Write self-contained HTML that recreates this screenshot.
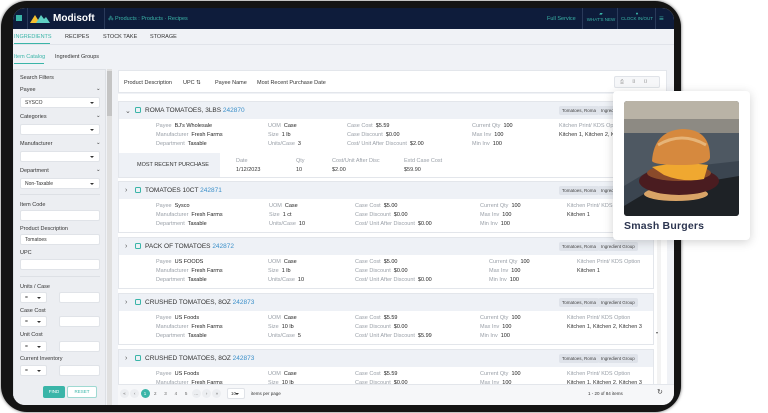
<!DOCTYPE html>
<html><head><meta charset="utf-8"><style>
*{box-sizing:border-box;margin:0;padding:0}
body{width:768px;height:413px;background:#fff;position:relative;overflow:hidden;font-family:"Liberation Sans",sans-serif;color:#333;font-size:5.5px}
.a{position:absolute;white-space:nowrap}
.frame{position:absolute;left:1px;top:1px;width:680px;height:411px;background:#141414;border-radius:26px;box-shadow:0 0 3px #666}
.screen{position:absolute;left:13px;top:8px;width:661px;height:397px;background:#f0f2f6;border-radius:12px 12px 12px 12px;overflow:hidden}
.hdr{position:absolute;left:0;top:0;width:661px;height:21px;background:#0e1c3b}
.teal{color:#3ab5a8}
.lbl{color:#9aa0a8}
.v{color:#222;margin-left:3px}
.sel{position:absolute;background:#fff;border:1px solid #e0e3e8;border-radius:2px;height:11px;font-size:5px;padding:2px 4px;color:#333}
.sel:after{content:"";position:absolute;right:5px;top:4px;border:2px solid transparent;border-top:2.5px solid #333}
.inp{position:absolute;background:#fff;border:1px solid #e0e3e8;border-radius:2px;height:11px;font-size:5px;padding:2px 4px}
.row{position:absolute;left:105px;width:536px;background:#fff;border:1px solid #e3e6eb}
.rh{position:absolute;left:0;top:0;width:100%;height:17px;background:#eef1f6}
.chev{position:absolute;left:6px;top:5px;font-size:7px;color:#555}
.cb{position:absolute;left:16px;top:5px;width:6px;height:6px;border:1px solid #3ab5a8;border-radius:1.5px}
.ttl{position:absolute;left:26px;top:5px;font-size:6.5px;color:#333}
.ttl b{font-weight:normal;color:#3a8fc9}
.tag{position:absolute;top:4px;height:9px;background:#dfe3ea;border-radius:2px;font-size:4.5px;padding:2px 3px;color:#444}
</style></head><body>
<div class="frame"></div>
<div class="screen">
 <div class="hdr">
  <div class="a" style="left:3px;top:7px;width:6px;height:6px;background:#3ab5a8"></div>
  <div class="a" style="left:14px;top:0;width:1px;height:21px;background:#2a3a5a"></div>
  <svg class="a" style="left:17px;top:6px" width="20" height="9" viewBox="0 0 20 9"><path d="M0 9 L5 1 L10 9Z" fill="#f5c030"/><path d="M6 9 L11 1 L14 5 L16 3 L20 9Z" fill="#5fd0c3"/></svg>
  <div class="a" style="left:40px;top:5px;font-size:10px;font-weight:bold;color:#fff">Modisoft</div>
  <div class="a" style="left:91px;top:0;width:1px;height:21px;background:#2a3a5a"></div>
  <div class="a teal" style="left:95px;top:8px;font-size:5.5px">⁂ Products : Products · Recipes</div>
  <div class="a teal" style="left:534px;top:8px;font-size:5.5px">Full Service</div>
  <div class="a" style="left:569px;top:0;width:1px;height:21px;background:#2a3a5a"></div>
  <div class="a teal" style="left:571px;top:3px;font-size:4.5px;width:34px;text-align:center">▰<br>WHAT'S NEW</div>
  <div class="a" style="left:604px;top:0;width:1px;height:21px;background:#2a3a5a"></div>
  <div class="a teal" style="left:605px;top:3px;font-size:4.5px;width:38px;text-align:center">●<br>CLOCK IN/OUT</div>
  <div class="a" style="left:642px;top:0;width:1px;height:21px;background:#2a3a5a"></div>
  <div class="a teal" style="left:646px;top:6px;font-size:8px">≡</div>
 </div>
 <div class="a teal" style="left:1px;top:26px;font-size:5.5px">INGREDIENTS</div>
 <div class="a" style="left:1px;top:35px;width:36px;height:1px;background:#3ab5a8"></div>
 <div class="a" style="left:52px;top:26px;font-size:5.5px">RECIPES</div>
 <div class="a" style="left:90px;top:26px;font-size:5.5px">STOCK TAKE</div>
 <div class="a" style="left:137px;top:26px;font-size:5.5px">STORAGE</div>
 <div class="a" style="left:0;top:36px;width:661px;height:1px;background:#e1e4ea"></div>
 <div class="a teal" style="left:1px;top:46px;font-size:5.5px">Item Catalog</div>
 <div class="a" style="left:1px;top:55px;width:30px;height:1px;background:#3ab5a8"></div>
 <div class="a" style="left:42px;top:46px;font-size:5.5px">Ingredient Groups</div>

 <div class="a" style="left:0;top:61px;width:93px;height:340px;background:#eceef2;border:1px solid #dde0e5"></div>
 <div class="a" style="left:94px;top:61px;width:5px;height:340px;background:#e0e0e0"></div>
 <div class="a" style="left:94px;top:63px;width:5px;height:45px;background:#c4c4c4"></div>
 <div class="a" style="left:7px;top:67px">Search Filters</div>
 <div class="a" style="left:7px;top:79px">Payee</div><div class="a" style="left:83px;top:78px">⌄</div>
 <div class="sel" style="left:7px;top:89px;width:80px">SYSCO</div>
 <div class="a" style="left:7px;top:106px">Categories</div><div class="a" style="left:83px;top:105px">⌄</div>
 <div class="sel" style="left:7px;top:116px;width:80px"></div>
 <div class="a" style="left:7px;top:133px">Manufacturer</div><div class="a" style="left:83px;top:132px">⌄</div>
 <div class="sel" style="left:7px;top:143px;width:80px"></div>
 <div class="a" style="left:7px;top:160px">Department</div><div class="a" style="left:83px;top:159px">⌄</div>
 <div class="sel" style="left:7px;top:170px;width:80px">Non-Taxable</div>
 <div class="a" style="left:7px;top:186px;width:80px;height:1px;background:#dde0e5"></div>
 <div class="a" style="left:7px;top:194px">Item Code</div>
 <div class="inp" style="left:7px;top:202px;width:80px"></div>
 <div class="a" style="left:7px;top:218px">Product Description</div>
 <div class="inp" style="left:7px;top:226px;width:80px">Tomatoes</div>
 <div class="a" style="left:7px;top:242px">UPC</div>
 <div class="inp" style="left:7px;top:251px;width:80px"></div>
 <div class="a" style="left:7px;top:268px;width:80px;height:1px;background:#dde0e5"></div>
 <div class="a" style="left:7px;top:276px">Units / Case</div>
 <div class="sel" style="left:7px;top:284px;width:27px">=</div><div class="inp" style="left:46px;top:284px;width:41px"></div>
 <div class="a" style="left:7px;top:300px">Case Cost</div>
 <div class="sel" style="left:7px;top:308px;width:27px">=</div><div class="inp" style="left:46px;top:308px;width:41px"></div>
 <div class="a" style="left:7px;top:324px">Unit Cost</div>
 <div class="sel" style="left:7px;top:333px;width:27px">=</div><div class="inp" style="left:46px;top:333px;width:41px"></div>
 <div class="a" style="left:7px;top:348px">Current Inventory</div>
 <div class="sel" style="left:7px;top:357px;width:27px">=</div><div class="inp" style="left:46px;top:357px;width:41px"></div>
 <div class="a" style="left:30px;top:378px;width:22px;height:12px;background:#3ab5a8;border-radius:2px;color:#fff;font-size:4.5px;text-align:center;line-height:12px">FIND</div>
 <div class="a" style="left:54px;top:378px;width:30px;height:12px;background:#fff;border:1px solid #9fd9d2;border-radius:2px;color:#3ab5a8;font-size:4.5px;text-align:center;line-height:10px">RESET</div>

 <div class="a" style="left:105px;top:62px;width:549px;height:23px;background:#fff;border:1px solid #e3e6eb"></div>
 <div class="a" style="left:111px;top:72px">Product Description</div>
 <div class="a" style="left:170px;top:72px">UPC ⇅</div>
 <div class="a" style="left:202px;top:72px">Payee Name</div>
 <div class="a" style="left:244px;top:72px">Most Recent Purchase Date</div>
 <div class="a" style="left:601px;top:68px;width:46px;height:12px;border:1px solid #e0e3e8;border-radius:2px;background:#f6f7f9;color:#999;font-size:5px;line-height:10px;letter-spacing:8px;padding-left:5px">⎙▯▯</div>
 <div class="a" style="left:105px;top:86px;width:549px;height:290px;background:#fff"></div>

 <div class="row" style="top:93px;height:77px">
  <div class="rh"></div><div class="chev">⌄</div><div class="cb"></div><div class="ttl">ROMA TOMATOES, 3LBS <b>242870</b></div>
  <div class="tag" style="left:440px">Tomatoes, Roma</div><div class="tag" style="left:479px">Ingredient Group</div>
  <div class="a" style="left:37px;top:21px"><span class="lbl">Payee</span><span class="v">BJ's Wholesale</span></div>
  <div class="a" style="left:37px;top:30px"><span class="lbl">Manufacturer</span><span class="v">Fresh Farms</span></div>
  <div class="a" style="left:37px;top:39px"><span class="lbl">Department</span><span class="v">Taxable</span></div>
  <div class="a" style="left:149px;top:21px"><span class="lbl">UOM</span><span class="v">Case</span></div>
  <div class="a" style="left:149px;top:30px"><span class="lbl">Size</span><span class="v">1 lb</span></div>
  <div class="a" style="left:149px;top:39px"><span class="lbl">Units/Case</span><span class="v">3</span></div>
  <div class="a" style="left:228px;top:21px"><span class="lbl">Case Cost</span><span class="v">$5.59</span></div>
  <div class="a" style="left:228px;top:30px"><span class="lbl">Case Discount</span><span class="v">$0.00</span></div>
  <div class="a" style="left:228px;top:39px"><span class="lbl">Cost/ Unit After Discount</span><span class="v">$2.00</span></div>
  <div class="a" style="left:353px;top:21px"><span class="lbl">Current Qty</span><span class="v">100</span></div>
  <div class="a" style="left:353px;top:30px"><span class="lbl">Max Inv</span><span class="v">100</span></div>
  <div class="a" style="left:353px;top:39px"><span class="lbl">Min Inv</span><span class="v">100</span></div>
  <div class="a" style="left:440px;top:21px"><span class="lbl">Kitchen Print/ KDS Option</span></div>
  <div class="a" style="left:440px;top:30px">Kitchen 1, Kitchen 2, Kitchen 3</div>
  <div class="a" style="left:0;top:51px;width:101px;height:24px;background:#eef1f6"></div>
  <div class="a" style="left:18px;top:60px">MOST RECENT PURCHASE</div>
  <div class="a lbl" style="left:117px;top:56px">Date</div><div class="a" style="left:117px;top:65px">1/12/2023</div>
  <div class="a lbl" style="left:177px;top:56px">Qty</div><div class="a" style="left:177px;top:65px">10</div>
  <div class="a lbl" style="left:213px;top:56px">Cost/Unit After Disc</div><div class="a" style="left:213px;top:65px">$2.00</div>
  <div class="a lbl" style="left:285px;top:56px">Extd Case Cost</div><div class="a" style="left:285px;top:65px">$59.90</div>
 </div>

 <div class="row" style="top:173px;height:52px">
  <div class="rh"></div><div class="chev">›</div><div class="cb"></div><div class="ttl">TOMATOES 10CT <b>242871</b></div>
  <div class="tag" style="left:440px">Tomatoes, Roma</div><div class="tag" style="left:479px">Ingredient Group</div>
  <div class="a" style="left:37px;top:21px"><span class="lbl">Payee</span><span class="v">Sysco</span></div>
  <div class="a" style="left:37px;top:30px"><span class="lbl">Manufacturer</span><span class="v">Fresh Farms</span></div>
  <div class="a" style="left:37px;top:39px"><span class="lbl">Department</span><span class="v">Taxable</span></div>
  <div class="a" style="left:150px;top:21px"><span class="lbl">UOM</span><span class="v">Case</span></div>
  <div class="a" style="left:150px;top:30px"><span class="lbl">Size</span><span class="v">1 ct</span></div>
  <div class="a" style="left:150px;top:39px"><span class="lbl">Units/Case</span><span class="v">10</span></div>
  <div class="a" style="left:236px;top:21px"><span class="lbl">Case Cost</span><span class="v">$5.00</span></div>
  <div class="a" style="left:236px;top:30px"><span class="lbl">Case Discount</span><span class="v">$0.00</span></div>
  <div class="a" style="left:236px;top:39px"><span class="lbl">Cost/ Unit After Discount</span><span class="v">$0.00</span></div>
  <div class="a" style="left:361px;top:21px"><span class="lbl">Current Qty</span><span class="v">100</span></div>
  <div class="a" style="left:361px;top:30px"><span class="lbl">Max Inv</span><span class="v">100</span></div>
  <div class="a" style="left:361px;top:39px"><span class="lbl">Min Inv</span><span class="v">100</span></div>
  <div class="a" style="left:448px;top:21px"><span class="lbl">Kitchen Print/ KDS Option</span></div>
  <div class="a" style="left:448px;top:30px">Kitchen 1</div>
 </div>

 <div class="row" style="top:229px;height:52px">
  <div class="rh"></div><div class="chev">›</div><div class="cb"></div><div class="ttl">PACK OF TOMATOES <b>242872</b></div>
  <div class="tag" style="left:440px">Tomatoes, Roma</div><div class="tag" style="left:479px">Ingredient Group</div>
  <div class="a" style="left:37px;top:21px"><span class="lbl">Payee</span><span class="v">US FOODS</span></div>
  <div class="a" style="left:37px;top:30px"><span class="lbl">Manufacturer</span><span class="v">Fresh Farms</span></div>
  <div class="a" style="left:37px;top:39px"><span class="lbl">Department</span><span class="v">Taxable</span></div>
  <div class="a" style="left:149px;top:21px"><span class="lbl">UOM</span><span class="v">Case</span></div>
  <div class="a" style="left:149px;top:30px"><span class="lbl">Size</span><span class="v">1 lb</span></div>
  <div class="a" style="left:149px;top:39px"><span class="lbl">Units/Case</span><span class="v">10</span></div>
  <div class="a" style="left:236px;top:21px"><span class="lbl">Case Cost</span><span class="v">$5.00</span></div>
  <div class="a" style="left:236px;top:30px"><span class="lbl">Case Discount</span><span class="v">$0.00</span></div>
  <div class="a" style="left:236px;top:39px"><span class="lbl">Cost/ Unit After Discount</span><span class="v">$0.00</span></div>
  <div class="a" style="left:370px;top:21px"><span class="lbl">Current Qty</span><span class="v">100</span></div>
  <div class="a" style="left:370px;top:30px"><span class="lbl">Max Inv</span><span class="v">100</span></div>
  <div class="a" style="left:370px;top:39px"><span class="lbl">Min Inv</span><span class="v">100</span></div>
  <div class="a" style="left:458px;top:21px"><span class="lbl">Kitchen Print/ KDS Option</span></div>
  <div class="a" style="left:458px;top:30px">Kitchen 1</div>
 </div>

 <div class="row" style="top:285px;height:52px">
  <div class="rh"></div><div class="chev">›</div><div class="cb"></div><div class="ttl">CRUSHED TOMATOES, 8OZ <b>242873</b></div>
  <div class="tag" style="left:440px">Tomatoes, Roma</div><div class="tag" style="left:479px">Ingredient Group</div>
  <div class="a" style="left:37px;top:21px"><span class="lbl">Payee</span><span class="v">US Foods</span></div>
  <div class="a" style="left:37px;top:30px"><span class="lbl">Manufacturer</span><span class="v">Fresh Farms</span></div>
  <div class="a" style="left:37px;top:39px"><span class="lbl">Department</span><span class="v">Taxable</span></div>
  <div class="a" style="left:149px;top:21px"><span class="lbl">UOM</span><span class="v">Case</span></div>
  <div class="a" style="left:149px;top:30px"><span class="lbl">Size</span><span class="v">10 lb</span></div>
  <div class="a" style="left:149px;top:39px"><span class="lbl">Units/Case</span><span class="v">5</span></div>
  <div class="a" style="left:236px;top:21px"><span class="lbl">Case Cost</span><span class="v">$5.59</span></div>
  <div class="a" style="left:236px;top:30px"><span class="lbl">Case Discount</span><span class="v">$0.00</span></div>
  <div class="a" style="left:236px;top:39px"><span class="lbl">Cost/ Unit After Discount</span><span class="v">$5.99</span></div>
  <div class="a" style="left:361px;top:21px"><span class="lbl">Current Qty</span><span class="v">100</span></div>
  <div class="a" style="left:361px;top:30px"><span class="lbl">Max Inv</span><span class="v">100</span></div>
  <div class="a" style="left:361px;top:39px"><span class="lbl">Min Inv</span><span class="v">100</span></div>
  <div class="a" style="left:448px;top:21px"><span class="lbl">Kitchen Print/ KDS Option</span></div>
  <div class="a" style="left:448px;top:30px">Kitchen 1, Kitchen 2, Kitchen 3</div>
 </div>

 <div class="row" style="top:341px;height:40px">
  <div class="rh"></div><div class="chev">›</div><div class="cb"></div><div class="ttl">CRUSHED TOMATOES, 8OZ <b>242873</b></div>
  <div class="tag" style="left:440px">Tomatoes, Roma</div><div class="tag" style="left:479px">Ingredient Group</div>
  <div class="a" style="left:37px;top:21px"><span class="lbl">Payee</span><span class="v">US Foods</span></div>
  <div class="a" style="left:37px;top:30px"><span class="lbl">Manufacturer</span><span class="v">Fresh Farms</span></div>
  <div class="a" style="left:149px;top:21px"><span class="lbl">UOM</span><span class="v">Case</span></div>
  <div class="a" style="left:149px;top:30px"><span class="lbl">Size</span><span class="v">10 lb</span></div>
  <div class="a" style="left:236px;top:21px"><span class="lbl">Case Cost</span><span class="v">$5.59</span></div>
  <div class="a" style="left:236px;top:30px"><span class="lbl">Case Discount</span><span class="v">$0.00</span></div>
  <div class="a" style="left:361px;top:21px"><span class="lbl">Current Qty</span><span class="v">100</span></div>
  <div class="a" style="left:361px;top:30px"><span class="lbl">Max Inv</span><span class="v">100</span></div>
  <div class="a" style="left:448px;top:21px"><span class="lbl">Kitchen Print/ KDS Option</span></div>
  <div class="a" style="left:448px;top:30px">Kitchen 1, Kitchen 2, Kitchen 3</div>
 </div>
 <div class="a" style="left:644px;top:86px;width:4px;height:290px;background:#f3f3f3"></div>
 <div class="a" style="left:643px;top:322px;font-size:4px;color:#555">▾</div>

 <div class="a" style="left:105px;top:376px;width:556px;height:21px;background:#f6f7f9;border-top:1px solid #e3e6eb"></div>
 <div class="a" style="left:107px;top:381px;font-size:4.5px;color:#666;line-height:9px">
  <span style="display:inline-block;width:9px;height:9px;border-radius:50%;background:#eceef1;text-align:center">«</span>
  <span style="display:inline-block;width:9px;height:9px;border-radius:50%;background:#eceef1;text-align:center">‹</span>
  <span style="display:inline-block;width:9px;height:9px;border-radius:50%;background:#3ab5a8;color:#fff;text-align:center">1</span>
  <span style="display:inline-block;width:9px;text-align:center">2</span>
  <span style="display:inline-block;width:9px;text-align:center">3</span>
  <span style="display:inline-block;width:9px;text-align:center">4</span>
  <span style="display:inline-block;width:9px;text-align:center">5</span>
  <span style="display:inline-block;width:9px;height:9px;border-radius:50%;background:#eceef1;text-align:center">…</span>
  <span style="display:inline-block;width:9px;height:9px;border-radius:50%;background:#eceef1;text-align:center">›</span>
  <span style="display:inline-block;width:9px;height:9px;border-radius:50%;background:#eceef1;text-align:center">»</span>
 </div>
 <div class="sel" style="left:214px;top:380px;width:18px;font-size:4.5px;padding:2px 3px">10</div>
 <div class="a" style="left:238px;top:383px;font-size:4.5px">items per page</div>
 <div class="a" style="left:575px;top:383px;font-size:4.5px">1 - 20 of 84 items</div>
 <div class="a" style="left:644px;top:380px;font-size:7px;color:#444">↻</div>
</div>

<div class="a" style="left:613px;top:91px;width:137px;height:149px;background:#fff;border-radius:4px;box-shadow:0 2px 10px rgba(0,0,0,.18)"></div>
<svg class="a" style="left:624px;top:101px;border-radius:3px" width="115" height="115" viewBox="0 0 115 115">
 <rect width="115" height="115" fill="#4e5862"/>
 <rect width="115" height="22" fill="#b9b3a6"/>
 <rect y="18" width="115" height="14" fill="#8d8a83"/>
 <path d="M0 95 L20 75 L115 70 L115 115 L0 115Z" fill="#1e2226"/>
 <path d="M0 85 L25 70 L115 60 L115 75 L25 90 L0 105Z" fill="#3b4550"/>
 <ellipse cx="52" cy="93" rx="32" ry="7" fill="#d9a467"/>
 <ellipse cx="55" cy="80" rx="40" ry="14" fill="#4a1c20"/>
 <ellipse cx="55" cy="72" rx="32" ry="8" fill="#8a4a2a"/>
 <path d="M28 66 Q55 60 84 64 L80 78 Q60 82 40 74Z" fill="#f0a830"/>
 <path d="M28 60 Q30 30 58 28 Q86 28 86 56 Q86 64 58 64 Q30 64 28 60Z" fill="#d6893e"/>
 <path d="M34 44 Q58 30 82 44" stroke="#f0d0a0" stroke-width="3" fill="none" opacity=".6"/>
</svg>
<div class="a" style="left:624px;top:220px;font-size:10.5px;font-weight:bold;color:#2c3550;letter-spacing:.2px">Smash Burgers</div>
</body></html>
